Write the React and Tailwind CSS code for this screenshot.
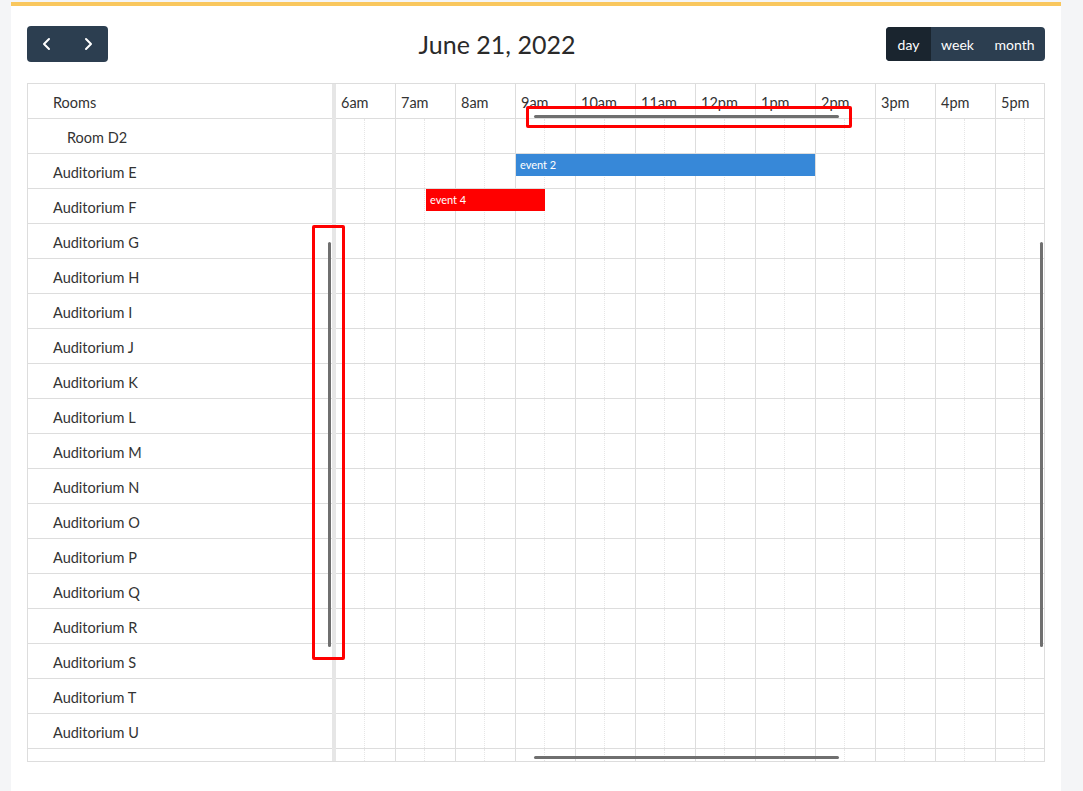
import React from "react";

const rooms = [
  { name: "Room D2", indent: true },
  ...["E","F","G","H","I","J","K","L","M","N","O","P","Q","R","S","T","U"].map((l) => ({ name: `Auditorium ${l}` })),
  { name: "" },
];

const hours = ["6am","7am","8am","9am","10am","11am","12pm","1pm","2pm","3pm","4pm","5pm"];

const events = {
  1: { title: "event 2", left: 180, width: 299, cls: "bg-[#3788d8]" },
  2: { title: "event 4", left: 90, width: 119, cls: "bg-[#ff0000]" },
};

function Chevron({ dir }) {
  return (
    <svg width="14" height="14" viewBox="0 0 14 14" fill="none">
      <path
        d={dir === "left" ? "M9 2 L4 7 L9 12" : "M5 2 L10 7 L5 12"}
        stroke="white"
        strokeWidth="2"
        strokeLinecap="round"
        strokeLinejoin="round"
      />
    </svg>
  );
}

function TimeRowCells() {
  return (
    <div className="flex h-full">
      {hours.map((h, i) => (
        <div
          key={h}
          className={`${i === hours.length - 1 ? "w-[48px]" : "w-[60px] border-r border-[#dddddd]"} h-full shrink-0 flex`}
        >
          <div className="w-[29px] h-full border-r border-dotted border-[#e6e6e6]" />
        </div>
      ))}
    </div>
  );
}

export default function App() {
  return (
    <div className="min-h-screen bg-[#f4f5f7] pt-[2px] overflow-hidden" style={{ fontFamily: "Lato, 'Noto Sans', sans-serif" }}>
      <div className="ml-[11px] w-[1050px] h-[789px] bg-white border-t-4 border-[#f9c75e] px-4 pt-5 text-[#333333]">
        <div className="flex items-center justify-between h-[36px]">
          <div className="flex h-[36px] rounded bg-[#2c3e50]">
            <button className="w-[40px] flex items-center justify-center"><Chevron dir="left" /></button>
            <button className="w-[41px] flex items-center justify-center"><Chevron dir="right" /></button>
          </div>
          <h2 className="text-[25px] leading-none text-[#2a2a2a]">June 21, 2022</h2>
          <div className="flex h-[34px] rounded bg-[#2c3e50] text-white text-[14px] overflow-hidden">
            <button className="w-[45px] bg-[#1a252f]">day</button>
            <button className="w-[53px]">week</button>
            <button className="w-[61px]">month</button>
          </div>
        </div>

        <div className="relative mt-[21px] w-[1018px] h-[679px]">
          <div className="w-full h-full border border-[#dddddd] flex overflow-hidden text-[14.5px] leading-[20px]">
            {/* resource column */}
            <div className="w-[304px] shrink-0 flex flex-col">
              <div className="h-[35px] shrink-0 border-b border-[#dddddd] flex items-center pt-[3px] pl-[25px]">Rooms</div>
              {rooms.map((r, i) => (
                <div
                  key={i}
                  className={`h-[35px] shrink-0 border-b border-[#dddddd] flex items-center pt-[3px] ${r.indent ? "pl-[39px]" : "pl-[25px]"}`}
                >
                  {r.name}
                </div>
              ))}
            </div>
            {/* divider */}
            <div className="w-[4px] shrink-0 bg-[#e6e6e6]" />
            {/* timeline */}
            <div className="w-[708px] shrink-0 flex flex-col">
              <div className="h-[35px] shrink-0 border-b border-[#dddddd] flex">
                {hours.map((h, i) => (
                  <div
                    key={h}
                    className={`${i === hours.length - 1 ? "w-[48px]" : "w-[60px] border-r border-[#dddddd]"} shrink-0 flex items-center pt-[3px] pl-[5px]`}
                  >
                    {h}
                  </div>
                ))}
              </div>
              {rooms.map((r, i) => (
                <div key={i} className="relative h-[35px] shrink-0 border-b border-[#dddddd]">
                  <TimeRowCells />
                  {events[i] && (
                    <div
                      className={`absolute top-0 h-[22px] ${events[i].cls} text-white text-[11px] leading-[22px] pl-[4px]`}
                      style={{ left: events[i].left, width: events[i].width }}
                    >
                      {events[i].title}
                    </div>
                  )}
                </div>
              ))}
            </div>
          </div>

          {/* scrollbars */}
          <div className="absolute left-[507px] top-[32px] w-[305px] h-[3px] rounded-full bg-[#6f6f6f]" />
          <div className="absolute left-[507px] top-[673px] w-[305px] h-[3px] rounded-full bg-[#6f6f6f]" />
          <div className="absolute left-[301px] top-[159px] w-[3px] h-[405px] rounded-full bg-[#6f6f6f]" />
          <div className="absolute left-[1013px] top-[159px] w-[3px] h-[405px] rounded-full bg-[#6f6f6f]" />

          {/* annotation boxes */}
          <div className="absolute left-[499px] top-[23px] w-[326px] h-[22px] border-[3px] border-[#ff0000] rounded-[2px]" />
          <div className="absolute left-[285px] top-[142px] w-[33px] h-[435px] border-[3px] border-[#ff0000] rounded-[2px]" />
        </div>
      </div>
    </div>
  );
}
